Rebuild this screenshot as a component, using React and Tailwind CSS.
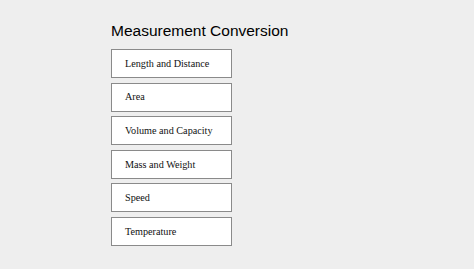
const categories = [
  'Length and Distance',
  'Area',
  'Volume and Capacity',
  'Mass and Weight',
  'Speed',
  'Temperature',
];

export default function App() {
  return (
    <div className="min-h-screen w-full bg-[#eeeeee] pl-[111px] pt-[22px]">
      <h1 className="text-[15.5px] leading-[17px] text-black font-['Liberation_Sans',Arial,sans-serif]">
        Measurement Conversion
      </h1>
      <div className="mt-[10px] flex flex-col gap-[4.6px]">
        {categories.map((name) => (
          <button
            key={name}
            className="w-[121px] h-[29px] flex items-center bg-white border border-[#8a8a8a] pl-[13px] text-left text-[10.2px] text-[#111] font-['Liberation_Serif','Times_New_Roman',serif]"
          >
            {name}
          </button>
        ))}
      </div>
    </div>
  );
}
